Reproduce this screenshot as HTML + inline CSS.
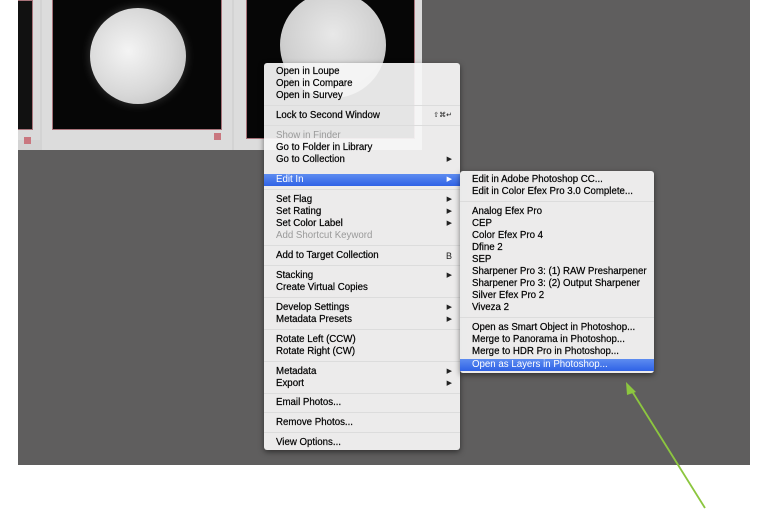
<!DOCTYPE html><html><head><style>
body{margin:0;width:768px;height:524px;background:#fff;position:relative;overflow:hidden;font-family:"Liberation Sans",sans-serif}
.a{position:absolute}
.m{position:absolute;background:rgba(246,246,246,0.93);box-shadow:0 2px 6px rgba(0,0,0,.5);border-radius:3px}
.i{position:absolute;left:12px;font-size:9.7px;line-height:12px;margin-top:1px;color:#000;white-space:nowrap;-webkit-text-stroke:0.2px #000}
.g{color:#9a9a9a;-webkit-text-stroke:0}
.s{position:absolute;left:0;right:0;height:1px;background:#dcdcdc}
.r{position:absolute;right:8px;font-size:7px;line-height:12px;margin-top:1px;color:#222}
.h{position:absolute;left:0;right:0;height:12px;margin-top:1px;background:linear-gradient(#5d8cf0,#2f62e6)}
</style></head><body>
<div class="a" style="left:18px;top:0;width:732px;height:465px;background:#5f5e5e"></div>
<div class="a" style="left:18px;top:0;width:404px;height:150px;background:#d3d3d3"></div>
<div class="a" style="left:18px;top:0;width:22px;height:140px;background:#dadada"></div>
<div class="a" style="left:18px;top:0;width:14px;height:128px;background:#111;border:1px solid #a8737a;border-left:none"></div>
<div class="a" style="left:24px;top:137px;width:7px;height:7px;background:#c9777f"></div>
<div class="a" style="left:42px;top:0;width:190px;height:150px;background:#dcdcdc"></div>
<div class="a" style="left:52px;top:0;width:168px;height:129px;background:#060606;border:1px solid #a8737a;border-top:none"></div>
<div class="a" style="left:90px;top:8px;width:96px;height:96px;border-radius:50%;background:radial-gradient(circle at 40% 45%,#f4f4f4,#d8d8d8 55%,#b8b8b8);box-shadow:0 0 10px rgba(255,255,255,.2)"></div>
<div class="a" style="left:214px;top:133px;width:7px;height:7px;background:#c9777f"></div>
<div class="a" style="left:234px;top:0;width:188px;height:150px;background:#dcdcdc"></div>
<div class="a" style="left:246px;top:0;width:167px;height:138px;background:#060606;border:1px solid #a8737a;border-top:none"></div>
<div class="a" style="left:280px;top:-8px;width:106px;height:106px;border-radius:50%;background:radial-gradient(circle at 50% 40%,#e8e8e8,#cfcfcf 60%,#b0b0b0)"></div>

<div class="m" style="left:264px;top:63px;width:196px;height:387px">
<div class="i" style="top:2px">Open in Loupe</div>
<div class="i" style="top:14px">Open in Compare</div>
<div class="i" style="top:26px">Open in Survey</div>
<div class="s" style="top:42px"></div>
<div class="i" style="top:46px">Lock to Second Window</div><div class="r" style="top:46px">⇧⌘↵</div>
<div class="s" style="top:62px"></div>
<div class="i g" style="top:66px">Show in Finder</div>
<div class="i" style="top:78px">Go to Folder in Library</div>
<div class="i" style="top:90px">Go to Collection</div><div class="r" style="top:90px">▶</div>
<div class="h" style="top:110px"></div>
<div class="i" style="top:110px;color:#fff;-webkit-text-stroke:0">Edit In</div><div class="r" style="top:110px;color:#fff">▶</div>
<div class="s" style="top:126px"></div>
<div class="i" style="top:130px">Set Flag</div><div class="r" style="top:130px">▶</div>
<div class="i" style="top:142px">Set Rating</div><div class="r" style="top:142px">▶</div>
<div class="i" style="top:154px">Set Color Label</div><div class="r" style="top:154px">▶</div>
<div class="i g" style="top:166px">Add Shortcut Keyword</div>
<div class="s" style="top:182px"></div>
<div class="i" style="top:186px">Add to Target Collection</div><div class="r" style="top:186px;font-size:9px">B</div>
<div class="s" style="top:202px"></div>
<div class="i" style="top:206px">Stacking</div><div class="r" style="top:206px">▶</div>
<div class="i" style="top:218px">Create Virtual Copies</div>
<div class="s" style="top:234px"></div>
<div class="i" style="top:238px">Develop Settings</div><div class="r" style="top:238px">▶</div>
<div class="i" style="top:250px">Metadata Presets</div><div class="r" style="top:250px">▶</div>
<div class="s" style="top:266px"></div>
<div class="i" style="top:270px">Rotate Left (CCW)</div>
<div class="i" style="top:282px">Rotate Right (CW)</div>
<div class="s" style="top:298px"></div>
<div class="i" style="top:302px">Metadata</div><div class="r" style="top:302px">▶</div>
<div class="i" style="top:314px">Export</div><div class="r" style="top:314px">▶</div>
<div class="s" style="top:330px"></div>
<div class="i" style="top:333px">Email Photos...</div>
<div class="s" style="top:349px"></div>
<div class="i" style="top:353px">Remove Photos...</div>
<div class="s" style="top:369px"></div>
<div class="i" style="top:373px">View Options...</div>
</div>

<div class="m" style="left:460px;top:171px;width:194px;height:202px">
<div class="i" style="top:2px">Edit in Adobe Photoshop CC...</div>
<div class="i" style="top:14px">Edit in Color Efex Pro 3.0 Complete...</div>
<div class="s" style="top:30px"></div>
<div class="i" style="top:34px">Analog Efex Pro</div>
<div class="i" style="top:46px">CEP</div>
<div class="i" style="top:58px">Color Efex Pro 4</div>
<div class="i" style="top:70px">Dfine 2</div>
<div class="i" style="top:82px">SEP</div>
<div class="i" style="top:94px">Sharpener Pro 3: (1) RAW Presharpener</div>
<div class="i" style="top:106px">Sharpener Pro 3: (2) Output Sharpener</div>
<div class="i" style="top:118px">Silver Efex Pro 2</div>
<div class="i" style="top:130px">Viveza 2</div>
<div class="s" style="top:146px"></div>
<div class="i" style="top:150px">Open as Smart Object in Photoshop...</div>
<div class="i" style="top:162px">Merge to Panorama in Photoshop...</div>
<div class="i" style="top:174px">Merge to HDR Pro in Photoshop...</div>
<div class="h" style="top:187px"></div>
<div class="i" style="top:187px;color:#fff;-webkit-text-stroke:0">Open as Layers in Photoshop...</div>
</div>

<svg class="a" style="left:0;top:0" width="768" height="524">
<line x1="705" y1="508" x2="630" y2="388" stroke="#8cc63f" stroke-width="1.8"/>
<polygon points="626,382 636,392 627,395" fill="#8cc63f"/>
</svg>
</body></html>
